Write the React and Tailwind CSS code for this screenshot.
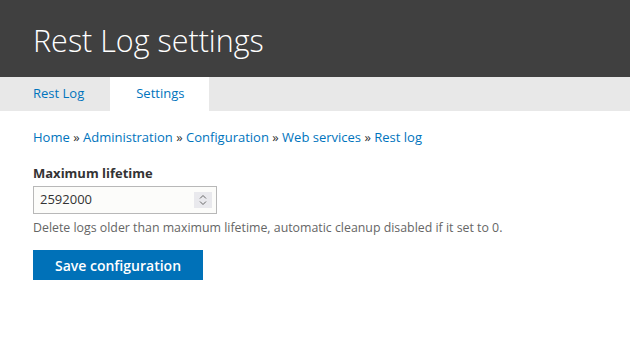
import React from 'react';

const crumbs = ['Home', 'Administration', 'Configuration', 'Web services', 'Rest log'];

export default function App() {
  return (
    <div className="w-[630px] h-[353px] bg-white font-['Open_Sans',sans-serif] text-[#333]">
      <header className="h-[77px] bg-[#404040] pl-[33px] flex items-center">
        <h1 className="text-[30.5px] font-light text-white leading-none pt-[4px]">Rest Log settings</h1>
      </header>
      <nav className="h-[34px] bg-[#e8e8e8] pl-[7px] flex">
        <a className="px-[26px] flex items-center text-[13px] text-[#0074bd]">Rest Log</a>
        <a className="px-[26px] pr-[25px] flex items-center text-[13px] text-[#0074bd] bg-white">Settings</a>
      </nav>
      <main className="px-[33px]">
        <div className="pt-[16px] text-[13px] text-[#0074bd] leading-[20px]">
          {crumbs.map((c, i) => (
            <span key={c}>
              {i > 0 && <span className="text-[#333]"> » </span>}
              <a>{c}</a>
            </span>
          ))}
        </div>
        <label className="block mt-[18px] text-[13px] font-bold leading-[16px]">Maximum lifetime</label>
        <div className="mt-[5px] w-[184px] h-[28px] border border-[#b8b8b8] bg-[#fcfcfa] flex items-center pl-[6px] pr-[4px]">
          <span className="flex-1 text-[13px] text-[#333]">2592000</span>
          <span className="w-[18px] h-[16px] bg-[#e9e9ed] flex items-center justify-center">
            <svg width="8" height="12" viewBox="0 0 8 12" fill="none" stroke="#666" strokeWidth="1">
              <path d="M1 4.5 L4 1.5 L7 4.5" />
              <path d="M1 7.5 L4 10.5 L7 7.5" />
            </svg>
          </span>
        </div>
        <p className="mt-[5px] text-[12.35px] text-[#666] leading-[18px]">
          Delete logs older than maximum lifetime, automatic cleanup disabled if it set to 0.
        </p>
        <button className="mt-[13px] w-[170px] h-[30px] bg-[#0071b8] text-white text-[14px] font-semibold">
          Save configuration
        </button>
      </main>
    </div>
  );
}
